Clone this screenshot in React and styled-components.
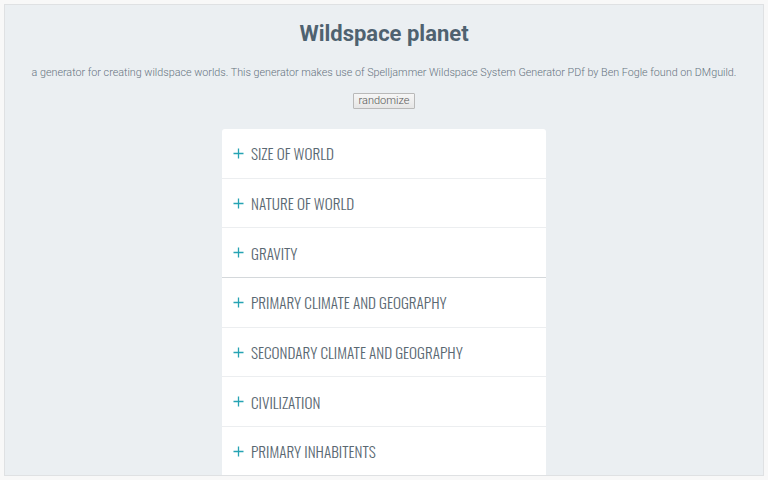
import React from 'react'
import styled, { createGlobalStyle } from 'styled-components'

const GlobalStyle = createGlobalStyle`
  html, body {
    margin: 0;
    padding: 0;
    background: #f8f8f8;
  }
  body {
    font-family: Roboto, "Liberation Sans", sans-serif;
  }
`

const sections = [
  'Size of world',
  'Nature of world',
  'Gravity',
  'Primary climate and geography',
  'Secondary climate and geography',
  'Civilization',
  'Primary inhabitents',
]

const Plus = () => (
  <svg width="11" height="11" viewBox="0 0 11 11">
    <path d="M5.5 0.5v10M0.5 5.5h10" stroke="#26a3b3" strokeWidth="1.3" fill="none" />
  </svg>
)

const App = () => (
  <>
    <GlobalStyle />
    <Frame>
      <Title>Wildspace planet</Title>
      <Intro>
        a generator for creating wildspace worlds. This generator makes use of Spelljammer
        Wildspace System Generator PDf by Ben Fogle found on DMguild.
      </Intro>
      <RandomButton type="button">randomize</RandomButton>
      <Accordion>
        {sections.map((s, i) => (
          <Item key={s} strong={i === 2}>
            <Plus />
            <Label>{s}</Label>
          </Item>
        ))}
      </Accordion>
    </Frame>
  </>
)

const Frame = styled.div`
  box-sizing: border-box;
  margin: 4px 4px 0 4px;
  height: 472px;
  border: 1px solid #dfe1e3;
  background: #ebeff2;
  overflow: hidden;
  display: flex;
  flex-direction: column;
  align-items: center;
`

const Title = styled.h1`
  margin: 16px 0 0;
  font-family: Roboto, "Liberation Sans", sans-serif;
  font-weight: 700;
  font-size: 22px;
  line-height: 26px;
  color: #4f6270;
`

const Intro = styled.p`
  margin: 19px 0 0;
  font-family: Roboto, "Liberation Sans", sans-serif;
  font-weight: 300;
  font-size: 10.75px;
  line-height: 14px;
  color: #66737f;
  text-align: center;
`

const RandomButton = styled.button`
  margin-top: 13px;
  height: 16px;
  padding: 0 5px;
  font-family: Roboto, "Liberation Sans", sans-serif;
  font-weight: 300;
  font-size: 11px;
  line-height: 14px;
  color: #555;
  background: linear-gradient(#f6f6f6, #e6e6e6);
  border: 1px solid #b9b9b9;
  border-radius: 1px;
`

const Accordion = styled.div`
  margin-top: 20px;
  width: 324px;
  background: #fff;
  border-radius: 3px 3px 0 0;
`

const Item = styled.div`
  box-sizing: border-box;
  height: 49.7px;
  flex-shrink: 0;
  display: flex;
  align-items: center;
  gap: 7px;
  padding-left: 11px;
  border-bottom: 1px solid ${p => (p.strong ? '#d4d8db' : '#eceef0')};
`

const Label = styled.span`
  font-family: Oswald, "Roboto Condensed", "Liberation Sans Narrow", "DejaVu Sans Condensed", sans-serif;
  font-stretch: condensed;
  font-weight: 300;
  font-size: 15.2px;
  text-transform: uppercase;
  color: #5a6872;
`

export default App
